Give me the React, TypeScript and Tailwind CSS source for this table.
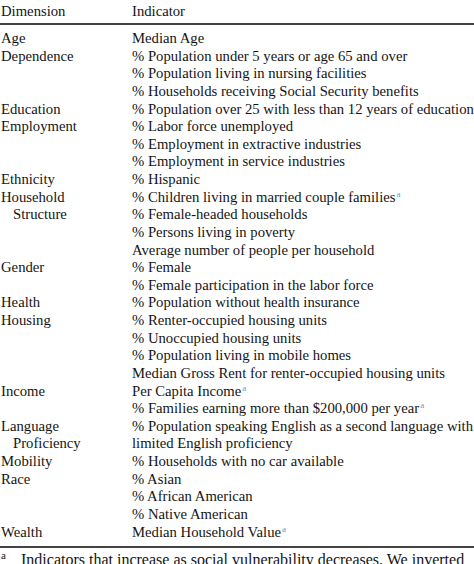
import React from "react";

type Row = { dim?: React.ReactNode; ind: React.ReactNode };

const Sup = () => (
  <span className="relative -top-[5px] text-[9px] text-[#4fa3da] leading-none ml-[1px]">a</span>
);

const rows: Row[] = [
  { dim: "Age", ind: "Median Age" },
  { dim: "Dependence", ind: "% Population under 5 years or age 65 and over" },
  { ind: "% Population living in nursing facilities" },
  { ind: "% Households receiving Social Security benefits" },
  { dim: "Education", ind: "% Population over 25 with less than 12 years of education" },
  { dim: "Employment", ind: "% Labor force unemployed" },
  { ind: "% Employment in extractive industries" },
  { ind: "% Employment in service industries" },
  { dim: "Ethnicity", ind: "% Hispanic" },
  { dim: "Household", ind: <>% Children living in married couple families<Sup /></> },
  { dim: <span className="pl-3">Structure</span>, ind: "% Female-headed households" },
  { ind: "% Persons living in poverty" },
  { ind: "Average number of people per household" },
  { dim: "Gender", ind: "% Female" },
  { ind: "% Female participation in the labor force" },
  { dim: "Health", ind: "% Population without health insurance" },
  { dim: "Housing", ind: "% Renter-occupied housing units" },
  { ind: "% Unoccupied housing units" },
  { ind: "% Population living in mobile homes" },
  { ind: "Median Gross Rent for renter-occupied housing units" },
  { dim: "Income", ind: <>Per Capita Income<Sup /></> },
  { ind: <>% Families earning more than $200,000 per year<Sup /></> },
  { dim: "Language", ind: "% Population speaking English as a second language with" },
  { dim: <span className="pl-3">Proficiency</span>, ind: "limited English proficiency" },
  { dim: "Mobility", ind: "% Households with no car available" },
  { dim: "Race", ind: "% Asian" },
  { ind: "% African American" },
  { ind: "% Native American" },
  { dim: "Wealth", ind: <>Median Household Value<Sup /></> },
];

export default function App() {
  return (
    <div
      className="w-[474px] h-[564px] overflow-hidden bg-white text-[#141414] text-[14.7px]"
      style={{ fontFamily: '"Liberation Serif", "Times New Roman", serif' }}
    >
      <div className="flex h-[23px] items-center leading-[17.64px] pl-[1px]">
        <div className="w-[131px]">Dimension</div>
        <div>Indicator</div>
      </div>
      <div className="h-[2px] bg-[#444]" />
      <div className="pt-[5px] pb-[5px]">
        {rows.map((r, i) => (
          <div key={i} className="flex h-[17.64px] items-center leading-[17.64px] whitespace-nowrap pl-[1px]">
            <div className="w-[131px] shrink-0">{r.dim}</div>
            <div className="shrink-0">{r.ind}</div>
          </div>
        ))}
      </div>
      <div className="h-[1.5px] bg-[#444]" />
      <div className="flex items-center h-[24px] whitespace-nowrap leading-[18px] text-[16px]">
        <span className="relative -top-[4px] text-[11px] leading-none w-[21px] pl-[1px]">a</span>
        <span>Indicators that increase as social vulnerability decreases. We inverted</span>
      </div>
    </div>
  );
}
